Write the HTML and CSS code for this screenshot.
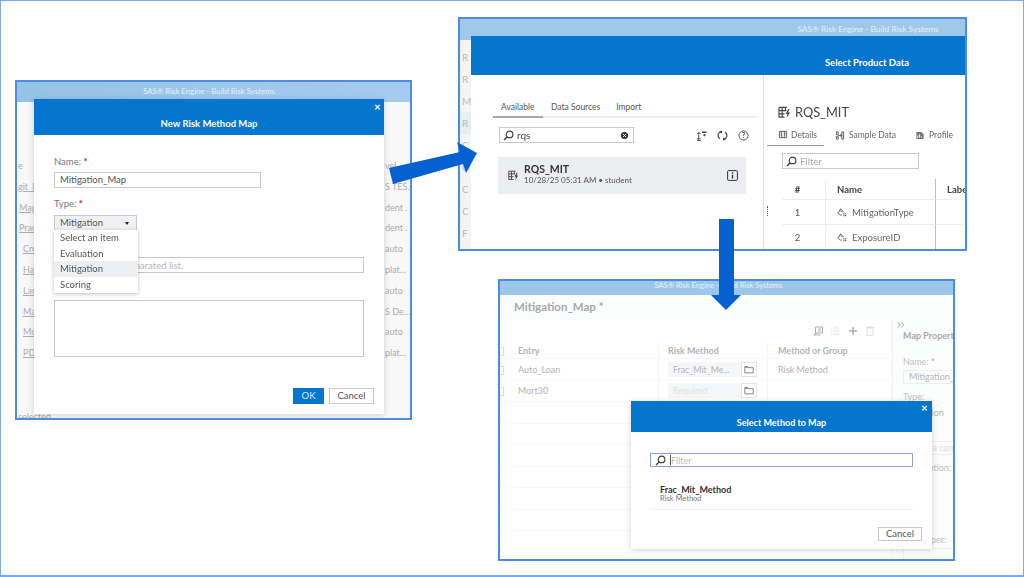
FILE: index.html
```html
<!DOCTYPE html>
<html lang="en">
<head>
<meta charset="utf-8">
<title>SAS Risk Engine - Build Risk Systems</title>
<link rel="stylesheet" href="styles.css">
</head>
<body>
<svg class="defs" width="0" height="0" aria-hidden="true">
  <symbol id="i-search" viewBox="0 0 12 12"><circle cx="7.2" cy="4.8" r="3.6" fill="none" stroke="currentColor" stroke-width="1.3"/><path d="M4.6 7.4 1.2 10.8" stroke="currentColor" stroke-width="1.6" fill="none"/></symbol>
  <symbol id="i-table" viewBox="0 0 14 14"><path d="M1 1.5h8.5M1 5h8M1 8.500h6M1 12h6M1 1.500V12M4.500 1.500V12M8 1.500V5" stroke="currentColor" stroke-width="1.200" fill="none"/><path d="M10.800 3.500 8.200 8.500h2l-1 4.500 3.800-6h-2.200l1.400-3.500z" fill="currentColor"/></symbol>
  <symbol id="i-folder" viewBox="0 0 12 10"><path d="M1 1.500h3.500l1 1.300H11V9H1z" fill="none" stroke="currentColor" stroke-width="1.200"/><path d="M1 1h3.500l1 1.800H1z" fill="currentColor"/></symbol>
  <symbol id="i-var" viewBox="0 0 12 12"><path d="M1 7.500 4.500 2 8 6.500" fill="none" stroke="currentColor" stroke-width="1.100"/><path d="M1 7.500 4.500 10 6 9" fill="none" stroke="currentColor" stroke-width="1.100"/><path d="M2.500 6.500 4.500 4l2 2.500" fill="none" stroke="currentColor" stroke-width=".8"/><path d="M7.500 7.500h1.500V9H7.500zM9.700 7.500h1.500V9H9.700zM7.500 9.700h1.500v1.500H7.500zM9.700 9.700h1.500v1.500H9.700z" fill="currentColor"/></symbol>
</svg>

<main class="stage">

  <section class="win win-a">
    <div class="titlebar title-a">SAS® Risk Engine - Build Risk Systems</div>
    <div class="backdrop">
      <ul class="crumbs crumbs-left">
        <li class="ind0">e</li>
        <li class="link ind0">git_l</li>
        <li class="link">Mag</li>
        <li class="link">Prac</li>
        <li class="link ind1">Cre</li>
        <li class="link ind1">Ha</li>
        <li class="link ind1">Lar</li>
        <li class="link ind1">Ma</li>
        <li class="link ind1">Mc</li>
        <li class="link ind1">PD</li>
      </ul>
      <ul class="crumbs crumbs-right">
        <li>vel</li>
        <li>S TES...</li>
        <li>dent .</li>
        <li>dent .</li>
        <li>auto</li>
        <li>plat...</li>
        <li>auto</li>
        <li>S De...</li>
        <li>auto</li>
        <li>plat...</li>
      </ul>
      <span class="status">selected</span>
    </div>
    <div class="dialog dialog-a">
      <header class="dlg-head head-a"><span class="close">✕</span><h2>New Risk Method Map</h2></header>
      <form class="form">
        <label class="lbl">Name: <b>*</b></label>
        <div class="input name-input">Mitigation_Map</div>
        <label class="lbl lbl-type">Type: <b>*</b></label>
        <div class="select-wrap">
          <div class="select">Mitigation<i class="caret"></i></div>
          <ul class="menu">
            <li>Select an item</li>
            <li>Evaluation</li>
            <li class="on">Mitigation</li>
            <li>Scoring</li>
          </ul>
        </div>
        <label class="lbl lbl-gap">Labels:</label>
        <div class="input ph wide">Enter a comma-separated list.</div>
        <label class="lbl lbl-desc">Description:</label>
        <div class="textarea"></div>
        <footer class="foot">
          <button type="button" class="btn primary">OK</button>
          <button type="button" class="btn">Cancel</button>
        </footer>
      </form>
    </div>
  </section>

  <section class="win win-b">
    <div class="titlebar title-b">SAS® Risk Engine - Build Risk Systems</div>
    <div class="backdrop">
      <ul class="letters">
        <li>R</li><li>R</li><li>M</li><li class="sel">R</li><li>C</li><li>O</li><li>C</li><li>C</li><li>F</li>
      </ul>
    </div>
    <div class="dialog dialog-b">
      <header class="dlg-head head-b"><h2>Select Product Data</h2></header>
      <div class="split">
        <div class="pane-l">
          <nav class="tabs">
            <span class="tab active">Available</span>
            <span class="tab">Data Sources</span>
            <span class="tab">Import</span>
          </nav>
          <div class="tools">
            <div class="search">
              <svg class="ic12"><use href="#i-search"/></svg>
              <span class="q">rqs</span>
              <svg class="clear" viewBox="0 0 10 10"><circle cx="5" cy="5" r="4" fill="#333"/><path d="M3.200 3.200l3.600 3.600M6.800 3.200 3.200 6.800" stroke="#fff" stroke-width="1"/></svg>
            </div>
            <div class="tool-icons">
              <svg class="ic12" viewBox="0 0 12 12"><path d="M3 11V3M1.200 4.500 3 2.500l1.800 2M1 9.500h4M1 11.500h4" stroke="#444" fill="none"/><path d="M6.500 1.500h5v1.800h-5zM8 4.500h2.500v1.500l-1.200 1-1.300-1z" fill="#444"/></svg>
              <svg class="ic12" viewBox="0 0 12 12"><path d="M5 1.500A4.500 4.500 0 0 0 3 9.500M7 10.500A4.500 4.500 0 0 0 9 2.500" stroke="#444" stroke-width="1.300" fill="none"/><path d="M5.500 .5v3.500L2.500 2zM6.500 11.500V8l3 2z" fill="#444"/></svg>
              <svg class="ic12" viewBox="0 0 12 12"><circle cx="6" cy="6" r="5" stroke="#444" fill="none"/><text x="6" y="8.800" text-anchor="middle" class="svg-q">?</text></svg>
            </div>
          </div>
          <div class="result">
            <svg class="ic11 res-ic"><use href="#i-table"/></svg>
            <div class="res-text">
              <strong>RQS_MIT</strong>
              <small>10/28/25 05:31 AM • student</small>
            </div>
            <svg class="ic10-box" viewBox="0 0 11 11"><rect x=".6" y=".6" width="9.800" height="9.800" rx="1" fill="none" stroke="#333"/><path d="M5.500 2.300v1.400M5.500 4.800v3.800" stroke="#333" stroke-width="1.300"/></svg>
          </div>
        </div>
        <div class="pane-r">
          <i class="grip"></i>
          <h3 class="prod"><svg class="ic14"><use href="#i-table"/></svg>RQS_MIT</h3>
          <nav class="rtabs">
            <span class="rtab active">
              <svg class="ic9" viewBox="0 0 10 10"><path d="M1 1.500h8v7H1zM3.500 1.500v7M6.500 1.500v7M2 3.500h.6M2 5.500h.6M7.500 3.500h.6M7.500 5.500h.6" stroke="#555" fill="none"/></svg>Details</span>
            <span class="rtab">
              <svg class="ic9" viewBox="0 0 10 10"><path d="M1 1h2v3H1zM1 6h2v3H1zM7 1h2v8H7zM3 5h4M5.500 3.500 7 5 5.500 6.500" stroke="#555" fill="none"/></svg>Sample Data</span>
            <span class="rtab">
              <svg class="ic9" viewBox="0 0 10 10"><path d="M1 1h5.500L9 3.500V9H1z" fill="#777"/><path d="M2.500 7.500V5M4.500 7.500V3.500M6.500 7.500V6" stroke="#fff"/></svg>Profile</span>
          </nav>
          <div class="search filter">
            <svg class="ic12"><use href="#i-search"/></svg>
            <span class="ph-text">Filter</span>
          </div>
          <div class="grid">
            <div class="cell num head">#</div><div class="cell head nm">Name</div><div class="cell head lab">Label</div>
            <div class="cell num">1</div><div class="cell nm"><svg class="ic10"><use href="#i-var"/></svg>MitigationType</div><div class="cell lab"></div>
            <div class="cell num">2</div><div class="cell nm"><svg class="ic10"><use href="#i-var"/></svg>ExposureID</div><div class="cell lab"></div>
          </div>
        </div>
      </div>
    </div>
  </section>

  <section class="win win-c">
    <div class="titlebar title-c">SAS® Risk Engine - Build Risk Systems</div>
    <div class="page">
      <h1 class="page-title">Mitigation_Map *</h1>
      <div class="page-body">
        <div class="map">
          <div class="map-tools">
            <svg class="ic10 faint1" viewBox="0 0 10 10"><path d="M2.500 1h7v6h-7zM1 9l2-2v2zM3.500 9h4M5 3h3M5 5h3" stroke="currentColor" fill="none"/></svg>
            <svg class="ic10 faint2" viewBox="0 0 10 10"><path d="M1 2h1M1 5h1M1 8h1M3.500 2H9M3.500 5H9M3.500 8H9" stroke="currentColor" fill="none"/></svg>
            <svg class="ic10 faint1" viewBox="0 0 10 10"><path d="M5 1v8M1 5h8" stroke="currentColor" stroke-width="1.500"/></svg>
            <svg class="ic10 faint2" viewBox="0 0 10 10"><path d="M2 2h6v7.500H2zM1 1.500h8M4 .5h2" stroke="currentColor" fill="none"/></svg>
          </div>
          <div class="map-row map-head"><i class="c0"></i><span class="c1">Entry</span><span class="c2">Risk Method</span><span class="c3">Method or Group</span></div>
          <div class="map-row"><i class="c0"></i><span class="c1 plain">Auto_Loan</span><span class="c2"><span class="pick">Frac_Mit_Me...</span><span class="pick-btn"><svg class="ic9"><use href="#i-folder"/></svg></span></span><span class="c3 plain">Risk Method</span></div>
          <div class="map-row"><i class="c0"></i><span class="c1 plain">Mort30</span><span class="c2"><span class="pick req">Required</span><span class="pick-btn"><svg class="ic9"><use href="#i-folder"/></svg></span></span><span class="c3"></span></div>
          <div class="map-row"></div><div class="map-row"></div><div class="map-row"></div><div class="map-row"></div><div class="map-row"></div><div class="map-row"></div>
        </div>
        <aside class="props">
          <svg class="chev" viewBox="0 0 8 6"><path d="M1 .5 3.200 3 1 5.500M4.500 .5 6.700 3 4.500 5.500" fill="none" stroke="#aaa"/></svg>
          <h4>Map Properties</h4>
          <span class="p-lbl">Name: <b>*</b></span>
          <div class="p-input">Mitigation_Map</div>
          <span class="p-lbl p-type">Type:</span>
          <span class="p-val">Mitigation</span>
          <div class="p-input p-tags">Enter a comma-separated list.</div>
          <span class="p-lbl p-desc">Description:</span>
          <span class="p-lbl p-dev">Developer:</span>
          <div class="p-input p-last"></div>
        </aside>
      </div>
    </div>
    <div class="dialog dialog-c">
      <header class="dlg-head head-c"><span class="close">✕</span><h2>Select Method to Map</h2></header>
      <div class="pick-body">
        <div class="search focus">
          <svg class="ic12"><use href="#i-search"/></svg>
          <i class="cursor"></i><span class="ph-text">Filter</span>
        </div>
        <div class="method">
          <strong>Frac_Mit_Method</strong>
          <small>Risk Method</small>
        </div>
        <footer class="foot foot-c"><button type="button" class="btn">Cancel</button></footer>
      </div>
    </div>
  </section>

  <svg class="arrows" viewBox="0 0 1024 577" aria-hidden="true">
    <polygon points="389,168 460,152 457,142 477,153 466,173 463,164 393,184"/>
    <polygon points="719,219 734,219 734,295 741,295 726,310 711,295 719,295"/>
  </svg>
</main>
</body>
</html>
```
FILE: styles.css
```css
* { box-sizing: border-box; }
html, body { margin: 0; padding: 0; background: #fff; }
body { font-family: Lato, "Open Sans", "Liberation Sans", sans-serif; color: #555; overflow: hidden; }
ul { list-style: none; margin: 0; padding: 0; }
h1, h2, h3, h4 { margin: 0; }
.defs { position: absolute; }

.stage { position: relative; width: 1024px; height: 577px; border: 1px solid #7ba8ec; border-bottom-width: 2px; overflow: hidden; filter: blur(.4px); }

.win { position: absolute; border: 2px solid #4d8ce6; background: #fff; overflow: hidden; display: flex; flex-direction: column; }
.win-a { left: 14px; top: 79px; width: 397px; height: 340px; }
.win-b { left: 457px; top: 16px; width: 509px; height: 234px; }
.win-c { left: 497px; top: 278px; width: 457px; height: 282px; }

.titlebar { flex: none; height: 20px; background: linear-gradient(90deg, #95c3e6, #a6cbef); color: #e4f0f9; font-size: 8.400px; line-height: 18px; text-align: center; }
.title-a { font-size: 7.800px; padding-right: 9px; }
.title-b { width: 816px; height: 21px; line-height: 20px; background: #9fc8ea; }
.title-c { height: 14px; line-height: 9px; padding-right: 16px; font-size: 7.600px; background: #9cc7ea; }

.backdrop { flex: 1; position: relative; background: #f8f8f8; display: flex; justify-content: space-between; }
.crumbs { font-size: 9px; color: #adadad; padding-top: 54px; white-space: nowrap; overflow: hidden; }
.crumbs li { height: 20.800px; line-height: 20.800px; overflow: hidden; }
.crumbs-left { width: 19px; }
.crumbs-left .link { text-decoration: underline; }
.crumbs-left li { padding-left: 2px; }
.crumbs-left .ind0 { padding-left: 1px; }
.crumbs-left .ind1 { padding-left: 6px; }
.crumbs-right { width: 25px; }
.status { position: absolute; left: 1px; bottom: -4px; font-size: 9px; color: #aaa; }

.letters { width: 12px; height: 100%; background: #f4f4f4; padding-top: 6px; font-size: 10px; color: #bbb; }
.letters li { height: 22px; line-height: 22px; padding-left: 2px; }
.letters .sel { background: #e6edf5; }

.dialog { position: absolute; background: #fff; box-shadow: 0 1px 6px rgba(0, 0, 0, .18); display: flex; flex-direction: column; }
.dialog-a { left: 17px; top: 17px; width: 350px; height: 315px; }
.dialog-b { left: 11px; top: 17px; width: 792px; height: 300px; box-shadow: none; }
.dialog-c { left: 131px; top: 120px; width: 301px; height: 148px; }

.dlg-head { position: relative; flex: none; height: 36px; background: #0476ce; color: #fff; display: flex; align-items: flex-end; justify-content: center; padding-bottom: 6px; }
.dlg-head h2 { font-size: 9.500px; line-height: 12px; font-weight: 700; }
.head-a { padding-bottom: 5px; }
.head-b { height: 39px; padding-bottom: 6px; }
.head-c { height: 31px; padding-bottom: 3px; }
.head-c h2 { font-size: 9px; }
.close { position: absolute; right: 3px; top: 3px; font-size: 8px; line-height: 10px; font-weight: 700; }
.head-c .close { right: 4px; top: 2px; }

.form { flex: 1; display: flex; flex-direction: column; padding: 20px 20px 10px; font-size: 9.500px; }
.lbl { height: 12px; line-height: 14px; color: #777; }
.lbl b { color: #c8202f; }
.lbl-type { margin-top: 9px; }
.lbl-gap { margin-top: 10px; }
.lbl-desc { margin-top: 7px; }
.input { height: 16px; border: 1px solid #c4c8cd; line-height: 14px; padding-left: 5px; color: #555; margin-top: 5px; }
.name-input { width: 207px; }
.lbl-gap + .input { margin-top: 4px; }
.ph { color: #b4b4b4; line-height: 15px; }
.wide { width: 310px; }
.select-wrap { position: relative; width: 83px; margin-top: 6px; height: 16px; }
.select { height: 16px; background: #f0f1f2; border: 1px solid #c4c8cd; line-height: 14px; padding-left: 5px; display: flex; align-items: center; justify-content: space-between; padding-right: 7px; }
.caret { width: 0; height: 0; border: 2.500px solid transparent; border-top: 3.500px solid #222; border-bottom: 0; }
.menu { position: absolute; z-index: 2; left: 0; top: 15px; width: 84px; padding-bottom: 1px; background: #fff; box-shadow: 0 1px 4px rgba(0, 0, 0, .25); }
.menu li { height: 15.500px; line-height: 15.500px; padding-left: 6px; }
.menu .on { background: #edeff2; }
.textarea { width: 310px; height: 57px; border: 1px solid #c4c8cd; margin-top: 8px; }
.foot { margin-top: auto; display: flex; justify-content: flex-end; gap: 5px; margin-right: -10px; }
.btn { height: 16px; padding: 0; width: 45px; border: 1px solid #c4c8cd; background: #fff; color: #555; font: 9.500px/14px Lato, sans-serif; }
.btn.primary { width: 31px; background: #0476ce; border-color: #0476ce; color: #dcecf8; }

.split { flex: 1; display: flex; min-height: 0; }
.pane-l { flex: none; width: 293px; padding: 21px 6px 0 22px; border-right: 1px solid #dedede; }
.tabs { height: 22px; border-bottom: 2px solid #ececec; display: flex; font-size: 8.500px; color: #555; }
.tab { height: 22px; line-height: 23px; padding: 0 8px; }
.tab.active { width: 50px; border-bottom: 2px solid #a9a9a9; }
.tools { display: flex; align-items: center; justify-content: space-between; margin: 9px 8px 0 6px; height: 16px; }
.search { display: flex; align-items: center; height: 16px; border: 1px solid #c6c9cd; padding: 0 4px 0 3px; color: #444; background: #fff; }
.tools .search { width: 135px; }
.q { font-size: 10px; margin-left: 3px; }
.clear { width: 9px; height: 9px; margin-left: auto; }
.tool-icons { display: flex; gap: 10px; color: #444; }
.svg-q { font: 700 8px Lato, sans-serif; fill: #444; }
.ic12 { width: 11px; height: 11px; flex: none; color: #444; }
.ic11 { width: 11px; height: 11px; flex: none; color: #444; }
.ic14 { width: 13px; height: 13px; flex: none; color: #444; }
.ic10 { width: 10px; height: 10px; flex: none; }
.ic9 { width: 10px; height: 9px; flex: none; }
.ic10-box { width: 11px; height: 11px; flex: none; margin-left: auto; }
.result { display: flex; align-items: center; margin: 14px 11px 0 5px; height: 37px; background: #ecedf0; padding: 0 8px 0 10px; }
.res-ic { margin-right: 5px; }
.res-text { display: flex; flex-direction: column; margin-top: -1px; }
.res-text strong { font-size: 10.500px; line-height: 10px; color: #333; font-weight: 700; }
.res-text small { font-size: 8px; line-height: 12px; color: #555; }

.pane-r { position: relative; flex: 1; padding-top: 27px; }
.grip { position: absolute; left: 3px; top: 131px; width: 1px; height: 10px; border-left: 1px dotted #555; }
.prod { display: flex; align-items: center; gap: 4px; height: 20px; padding-left: 14px; font-size: 12.800px; font-weight: 400; color: #444; }
.rtabs { display: flex; margin-top: 3px; height: 21px; font-size: 8.500px; color: #666; }
.rtab { display: flex; align-items: center; gap: 4px; height: 21px; padding: 0 0 1px 11px; margin-right: 8px; }
.rtab.active { width: 57px; gap: 3px; margin-left: 3px; border-bottom: 1.500px solid #999; margin-right: 0; }
.filter { width: 137px; margin: 7px 0 0 18px; }
.ph-text { font-size: 9.500px; color: #aaa; margin-left: 3px; }
.grid { display: grid; grid-template-columns: 44px 110px 300px; grid-template-rows: 21px 25px 25px; margin: 10px 0 0 18px; font-size: 9.500px; color: #555; }
.cell { display: flex; align-items: center; border-bottom: 1px solid #eee; }
.cell.head { font-weight: 700; color: #444; }
.num { justify-content: center; padding-right: 12px; border-right: 1px solid #f0f0f0; }
.nm { padding-left: 11px; gap: 5px; border-right: 1.500px solid #bdbdbd; color: #666; }
.lab { padding-left: 11px; }

.page { flex: 1; background: #fbfcfc; display: flex; flex-direction: column; color: #b4b4b4; min-height: 0; }
.page-title { flex: none; height: 25px; line-height: 24px; padding-left: 14px; font-size: 11.500px; font-weight: 700; color: #a8a8a8; }
.page-body { flex: 1; display: flex; min-height: 0; }
.map { flex: none; width: 390px; background: #fff; font-size: 9px; }
.map-tools { height: 22px; display: flex; align-items: center; justify-content: flex-end; gap: 7.500px; padding-right: 15px; }
.faint1 { color: #a9adb1; }
.faint2 { color: #dde0e3; }
.map-row { display: flex; height: 21.500px; align-items: center; border-bottom: 1px solid #f8f8f8; }
.map-head { height: 17px; font-weight: 700; }
.c0 { position: relative; width: 18px; height: 7px; flex: none; }
.c0::before { content: ""; position: absolute; left: -3px; top: 0; width: 5px; height: 7px; border: 1px solid #ddd; }
.c1 { width: 141px; flex: none; height: 100%; display: flex; align-items: center; border-right: 1px solid #f6f6f6; }
.c2 { width: 109px; flex: none; height: 100%; display: flex; align-items: center; padding-left: 9px; border-right: 1px solid #f6f6f6; }
.c3 { flex: 1; padding-left: 10px; }
.plain { font-weight: 400; }
.pick { width: 73px; height: 15px; line-height: 15px; background: #f5f6f7; padding-left: 5px; white-space: nowrap; overflow: hidden; font-size: 8.800px; }
.pick.req { color: #e2e2e2; }
.pick-btn { width: 16px; height: 15px; border: 1px solid #e2e4e6; display: flex; align-items: center; justify-content: center; color: #888; }

.props { flex: 1; display: flex; flex-direction: column; padding-left: 10px; border-left: 1px solid #f2f2f2; margin-left: 2px; white-space: nowrap; font-size: 9px; min-width: 0; }
.chev { flex: none; width: 8px; height: 10px; margin-left: -6px; }
.props h4 { font-size: 9px; line-height: 12px; color: #aaa; }
.p-lbl { line-height: 12px; color: #c2c2c2; }
.p-lbl b { color: #e2a0a5; }
.props h4 + .p-lbl { margin-top: 14px; }
.p-input { height: 14px; width: 120px; margin-top: 2px; border: 1px solid #eee; line-height: 12px; padding-left: 5px; color: #b9b9b9; flex: none; }
.p-type { margin-top: 7px; }
.p-val { line-height: 12px; margin-top: 4px; }
.p-tags { margin-top: 22px; color: #ddd; }
.p-desc { margin-top: 7px; }
.p-dev { margin-top: 60px; }
.p-last { margin-top: 2px; height: 30px; }

.pick-body { flex: 1; display: flex; flex-direction: column; padding: 21px 19px 8px; }
.search.focus { border: 1px solid #8d9fdc; height: 14px; padding-left: 4px; }
.cursor { width: 1px; height: 10px; background: #555; margin-left: 4px; }
.search.focus .ph-text { margin-left: 0; font-size: 9px; color: #bbb; }
.method { display: flex; flex-direction: column; margin-top: 18px; padding: 0 0 5px 10px; border-bottom: 1px solid #eee; }
.method strong { font-size: 9px; line-height: 9px; color: #333; }
.method small { font-size: 7.500px; line-height: 10px; color: #777; }
.foot-c { margin-right: -9px; }
.foot-c .btn { width: 44px; height: 14px; line-height: 12px; }

.arrows { position: absolute; left: -1px; top: -1px; width: 1024px; height: 577px; pointer-events: none; }
.arrows polygon { fill: #0561cf; }
```
